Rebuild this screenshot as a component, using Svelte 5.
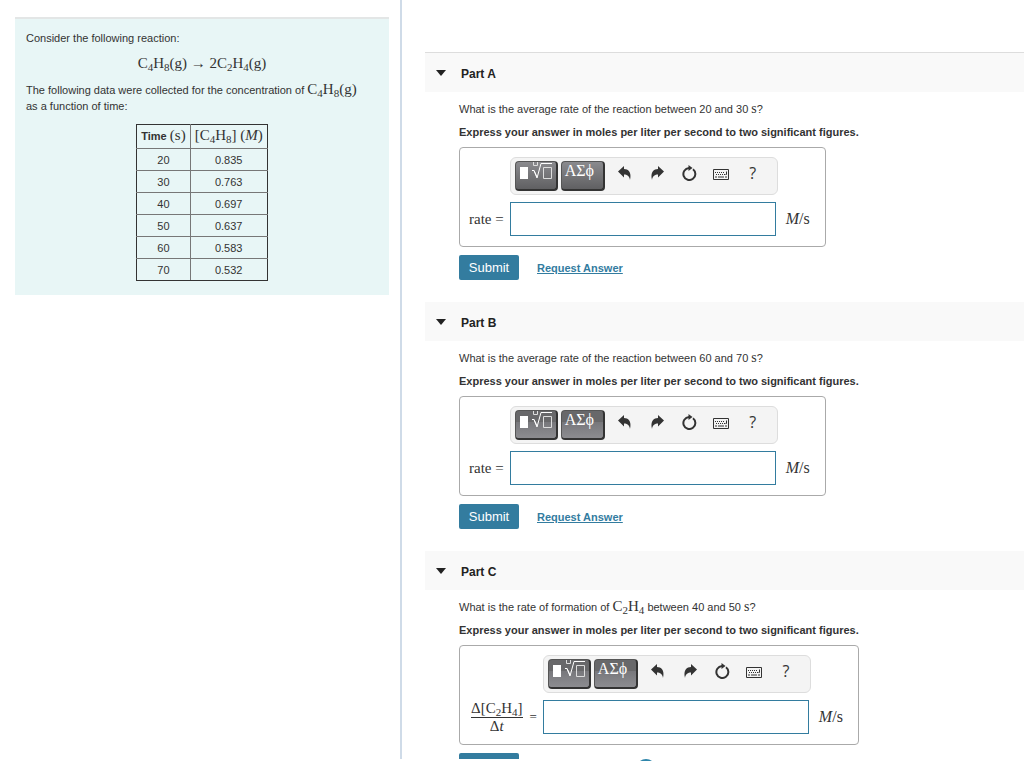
<script>
  const rows = [
    ['20', '0.835'],
    ['30', '0.763'],
    ['40', '0.697'],
    ['50', '0.637'],
    ['60', '0.583'],
    ['70', '0.532']
  ];
  const parts = [
    { id: 'A', from: 20, to: 30 },
    { id: 'B', from: 60, to: 70 },
    { id: 'C', from: 40, to: 50 }
  ];
</script>

{#snippet c4h8()}C<sub>4</sub>H<sub>8</sub>{/snippet}
{#snippet c2h4()}C<sub>2</sub>H<sub>4</sub>{/snippet}

<div class="page">
  <div class="columns">
    <aside>
      <section class="problem">
        <p>Consider the following reaction:</p>
        <p class="equation math">{@render c4h8()}(g) → 2{@render c2h4()}(g)</p>
        <p class="intro">The following data were collected for the concentration of <span class="math">{@render c4h8()}(g)</span> as a function of time:</p>
        <table>
          <thead>
            <tr>
              <th>Time <span class="math">(s)</span></th>
              <th><span class="math">[{@render c4h8()}] (<i>M</i>)</span></th>
            </tr>
          </thead>
          <tbody>
            {#each rows as [time, conc]}
              <tr><td>{time}</td><td>{conc}</td></tr>
            {/each}
          </tbody>
        </table>
      </section>
    </aside>

    <main>
      {#each parts as part, i}
        <section class="part">
          <h2 class:first={i === 0}>
            <button class="toggle" type="button">
              <svg width="10" height="6" viewBox="0 0 10 6" aria-hidden="true"><path d="M0 0H10L5 6Z" fill="#222" /></svg>
              Part {part.id}
            </button>
          </h2>
          <div class="body">
            <p class="question">
              {#if part.id === 'C'}
                What is the rate of formation of <span class="math">{@render c2h4()}</span> between {part.from} and {part.to} <span class="math unit-s">s</span>?
              {:else}
                What is the average rate of the reaction between {part.from} and {part.to} <span class="math unit-s">s</span>?
              {/if}
            </p>
            <p class="instruction">Express your answer in moles per liter per second to two significant figures.</p>

            <div class="answer">
              <div class="tools">
                <button class="palette" class:alt={i > 0} type="button" aria-label="Templates">
                  <svg width="40" height="27" viewBox="0 0 40 27" fill="none" stroke="#fff">
                    <path d="M4 5h8v12h-8z" fill="#fff" stroke="none" />
                    <path d="M16 8.500h2l3 7.500L25 1.500h11" />
                    <path d="M18 8.500l3 6.500" />
                    <path d="M17.500 0v3.500h4V0" stroke="#ddd" />
                    <path d="M27.500 5.500h8v11h-8z" stroke="#ddd" />
                  </svg>
                </button>
                <button class="palette greek" class:alt={i > 0} type="button">ΑΣϕ</button>
                <button class="icon" type="button" aria-label="Undo">
                  <svg width="14" height="14" viewBox="0 0 14 14"><path d="M6 0V3C10 3 14 6 12 14C11.500 10 9 8.500 6 8.500V11.500L0 5.500Z" fill="#333" /></svg>
                </button>
                <button class="icon" type="button" aria-label="Redo">
                  <svg width="14" height="14" viewBox="0 0 14 14"><path d="M8 0V3C4 3 0 6 2 14C2.500 10 5 8.500 8 8.500V11.500L14 5.500Z" fill="#333" /></svg>
                </button>
                <button class="icon" type="button" aria-label="Reset">
                  <svg width="16" height="16" viewBox="0 0 16 16"><path d="M12 4.200A6 6 0 1 1 8 3" fill="none" stroke="#333" stroke-width="2" /><path d="M7.500 0L11.500 3L7.500 6Z" fill="#333" /></svg>
                </button>
                <button class="icon keys" type="button" aria-label="Keyboard shortcuts">
                  <svg width="16" height="11" viewBox="0 0 16 11" fill="none" stroke="#333">
                    <path d="M.5.5h15v10h-15z" />
                    <path d="M2 3.500h9M3 5.500h9" stroke-dasharray="1 1" />
                    <path d="M2 8h2m1 0h6m1 0h2M13.500 2.500v3h-1" />
                  </svg>
                </button>
                <button class="icon help" type="button" aria-label="Help">?</button>
              </div>
              <label for="answer-{part.id}" class="math">
                {#if part.id === 'C'}
                  <span class="fraction"><span>Δ[{@render c2h4()}]</span><span>Δ<i>t</i></span></span><span class="equals">=</span>
                {:else}
                  rate =
                {/if}
              </label>
              <input id="answer-{part.id}" type="text" />
              <span class="math units"><i>M</i>/s</span>
            </div>

            <div class="actions">
              <button class="submit" type="button">Submit</button>
              <a href="#request-{part.id}">Request Answer</a>
            </div>
          </div>
        </section>
      {/each}
    </main>
  </div>
  <footer><span class="badge"></span></footer>
</div>

<style>
  :global(body) {
    margin: 0;
    background: #fff;
  }
  .page {
    display: flex;
    flex-direction: column;
    height: 100vh;
    overflow: hidden;
    font: 11px/16px "Liberation Sans", Arial, sans-serif;
    color: #333;
  }
  .columns {
    flex: 1;
    min-height: 0;
    display: grid;
    grid-template-columns: minmax(0, 402fr) minmax(0, 622fr);
    overflow: hidden;
  }
  p, h2 {
    margin: 0;
  }
  button, input {
    font: inherit;
    color: inherit;
    box-sizing: border-box;
    margin: 0;
    padding: 0;
  }
  aside {
    border-right: 2px solid #cfdbe8;
    padding: 17px 11px 0 15px;
  }
  .problem {
    background: #e8f6f6;
    border-top: 2px solid #e3e6e6;
    padding: 11px 11px 14px;
  }
  .math {
    font-family: "Liberation Serif", "Times New Roman", serif;
    font-weight: 400;
    font-size: 15px;
    line-height: 0;
  }
  sub {
    font-size: 11px;
    line-height: 0;
    vertical-align: -3px;
  }
  .equation {
    text-align: center;
    line-height: 16px;
    margin: 9px 0 11px;
  }
  .intro {
    padding-right: 12px;
  }
  table {
    border-collapse: collapse;
    border: 1px solid #333;
    margin: 10px auto 0;
    text-align: center;
  }
  th, td {
    border: 1px solid #777;
    padding: 3px 4px 2px;
    height: 16px;
  }
  th {
    height: 18px;
    padding: 2px 4px 3px;
    white-space: nowrap;
  }
  thead tr:first-child th {
    border-top-color: #333;
  }
  tr > :first-child {
    border-left-color: #333;
  }
  tr > :last-child {
    border-right-color: #333;
  }
  tbody tr:last-child td {
    border-bottom-color: #333;
  }
  main {
    padding: 52px 0 0 23px;
    overflow: hidden;
  }
  h2 {
    display: flex;
    background: #f9f9f9;
    height: 39px;
    font-size: 12px;
  }
  h2.first {
    border-top: 1px solid #ddd;
  }
  .toggle {
    display: flex;
    align-items: center;
    gap: 15px;
    border: 0;
    background: none;
    padding: 3px 0 0 11px;
    font-weight: 700;
    color: #222;
  }
  .toggle svg {
    margin-bottom: 3px;
  }
  .body {
    padding: 9px 0 22px 34px;
  }
  .instruction {
    font-weight: 700;
    margin: 7px 0;
  }
  .unit-s {
    font-size: 14px;
  }
  .answer {
    display: grid;
    width: max-content;
    grid-template-columns: auto auto auto;
    align-items: center;
    row-gap: 7px;
    box-sizing: border-box;
    border: 1px solid #aaa;
    border-radius: 4px;
    padding: 9px 15px 10px 9px;
  }
  .tools {
    grid-column: 2;
    display: flex;
    box-sizing: border-box;
    width: 268px;
    height: 38px;
    padding: 3px 4px;
    background: #f4f4f4;
    border: 1px solid #ddd;
    border-radius: 6px;
  }
  .palette {
    flex: none;
    width: 43px;
    height: 30px;
    margin-right: 3px;
    border: 1px solid #555;
    border-right: 2px solid #333;
    border-bottom: 2px solid #333;
    border-radius: 4px;
    background: linear-gradient(#8a8a8e, #606062);
    overflow: hidden;
    display: flex;
    color: #fff;
  }
  .palette.alt {
    background: linear-gradient(#68686a 40%, #77777b 40%, #8c8c90);
  }
  .palette svg {
    flex: none;
  }
  .greek {
    width: 44px;
    font-family: "Liberation Serif", serif;
    font-size: 16px;
    line-height: 18px;
    padding-left: 3px;
  }
  .icon {
    flex: none;
    width: 32px;
    height: 24px;
    border: 0;
    background: none;
    display: flex;
    align-items: center;
    justify-content: center;
  }
  .greek + .icon {
    margin-left: 1px;
  }
  .keys {
    padding-top: 3px;
  }
  .help {
    font-size: 16px;
    font-family: "Open Sans", sans-serif;
  }
  label {
    grid-column: 1;
    display: flex;
    align-items: center;
    padding-right: 6px;
  }
  .fraction {
    display: flex;
    flex-direction: column;
    align-items: center;
    margin: 0 7px 0 2px;
  }
  .fraction span {
    line-height: 16px;
  }
  .fraction span:first-child {
    padding-bottom: 1px;
  }
  .fraction span + span {
    border-top: 1px solid #333;
    align-self: stretch;
    text-align: center;
  }
  .equals {
    font-size: 13px;
  }
  input {
    width: 266px;
    height: 34px;
    border: 1px solid #337c9f;
    border-radius: 0;
    background: #fff;
    padding: 0 6px;
  }
  .units {
    margin-left: 8px;
    font-size: 16px;
  }
  .actions {
    display: flex;
    align-items: center;
    gap: 18px;
    margin-top: 8px;
  }
  .submit {
    width: 60px;
    height: 25px;
    border: 0;
    border-radius: 2px;
    background: #337c9f;
    color: #fff;
    font-size: 13px;
  }
  a {
    color: #337c9f;
    font-weight: 700;
  }
  footer {
    position: relative;
    flex: none;
    height: 2px;
    background: #fff;
  }
  .badge {
    position: absolute;
    left: 63%;
    top: 0;
    width: 20px;
    height: 20px;
    margin-left: -9px;
    border-radius: 50%;
    background: #2f86ab;
  }
</style>
